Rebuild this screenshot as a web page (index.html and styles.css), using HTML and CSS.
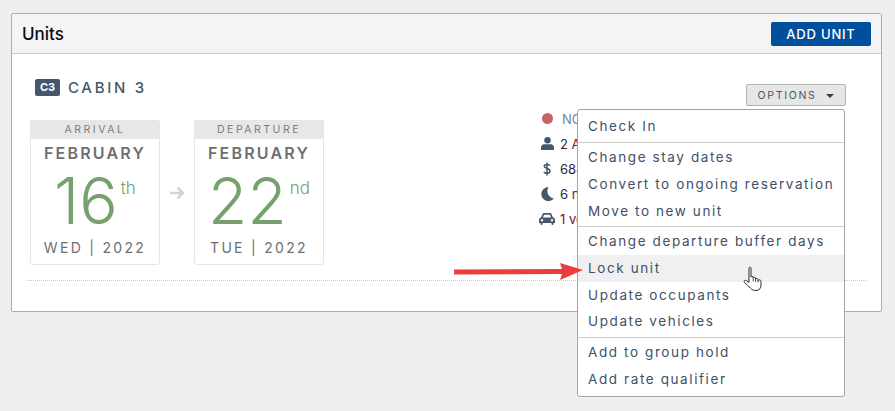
FILE: index.html
```html
<!DOCTYPE html>
<html lang="en">
<head>
    <meta charset="UTF-8">
    <meta name="viewport" content="width=device-width, initial-scale=1.0">
    <title>Units</title>
    <link rel="stylesheet" href="styles.css">
</head>
<body>
<section class="panel">
    <header class="panel-head">
        <h2 class="panel-title">Units</h2>
        <button class="add-btn">ADD UNIT</button>
    </header>

    <div class="panel-body">
        <div class="unit">
            <div class="unit-left">
                <div class="unit-name"><span class="unit-badge">C3</span>CABIN 3</div>
                <div class="dates">
                    <div class="date-card">
                        <div class="date-label">ARRIVAL</div>
                        <div class="date-month">FEBRUARY</div>
                        <div class="date-day">16<sup>th</sup></div>
                        <div class="date-year">WED | 2022</div>
                    </div>
                    <svg class="date-arrow" viewBox="0 0 16 14" width="16" height="14">
                        <path d="M1 7h13M8.500 1.500 14 7l-5.500 5.500" fill="none" stroke="#d4d4d4" stroke-width="2.600"/>
                    </svg>
                    <div class="date-card">
                        <div class="date-label">DEPARTURE</div>
                        <div class="date-month">FEBRUARY</div>
                        <div class="date-day">22<sup>nd</sup></div>
                        <div class="date-year">TUE | 2022</div>
                    </div>
                </div>
            </div>

            <!-- the rest of each row sits behind the open menu -->
            <ul class="info">
                <li><span class="info-icon"><i class="dot"></i></span><span class="status">NO</span></li>
                <li><span class="info-icon">
                    <svg viewBox="0 0 12 12" width="13" height="13"><circle cx="6" cy="3" r="3"/><path d="M0 12V9.800C0 8 1.300 6.700 3 6.700h6c1.700 0 3 1.300 3 3.100V12z"/></svg>
                </span><span>2 </span><span class="link">A</span></li>
                <li><span class="info-icon">
                    <svg viewBox="0 0 8 14" width="8" height="14"><path d="M7 3.600C6.500 2.700 5.300 2.400 4 2.400 2.500 2.400 1.200 3 1.200 4.300 1.200 5.600 2.500 6 4 6.500c1.600.5 3 1 3 2.500S5.600 11.400 4 11.400c-1.400 0-2.600-.5-3.200-1.400M4 .5v13" fill="none" stroke="#46566b" stroke-width="1.500"/></svg>
                </span>684</li>
                <li><span class="info-icon">
                    <svg viewBox="0 0 13 14" width="13" height="14"><path d="M7.500.1A7 7 0 1 0 12.800 11.500 7.500 7.500 0 0 1 7.500.1z"/></svg>
                </span><span>6 </span><span class="link">n</span></li>
                <li><span class="info-icon">
                    <svg viewBox="0 0 16 12" width="16" height="12"><path d="M3.500 1C3.800.400 4.400 0 5 0h6c.6 0 1.200.4 1.500 1L14 4.500c1.200.2 2 1.100 2 2.200V10h-1.500v1a1 1 0 0 1-2 0v-1h-9v1a1 1 0 0 1-2 0v-1H0V6.700c0-1.100.8-2 2-2.200zM5 1.700 4 4.500h8l-1-2.800zM3 6a1.200 1.200 0 1 0 0 2.400A1.200 1.200 0 0 0 3 6zm10 0a1.200 1.200 0 1 0 0 2.400A1.200 1.200 0 0 0 13 6z" fill-rule="evenodd"/></svg>
                </span><span class="link">1 ve</span></li>
            </ul>

            <button class="options-btn">OPTIONS<i class="caret"></i></button>

            <!-- Options dropdown -->
            <div class="menu">
                <a class="menu-item">Check In</a>
                <div class="menu-divider"></div>
                <a class="menu-item">Change stay dates</a>
                <a class="menu-item">Convert to ongoing reservation</a>
                <a class="menu-item">Move to new unit</a>
                <div class="menu-divider"></div>
                <a class="menu-item">Change departure buffer days</a>
                <a class="menu-item menu-item-hover">Lock unit</a>
                <a class="menu-item">Update occupants</a>
                <a class="menu-item">Update vehicles</a>
                <div class="menu-divider"></div>
                <a class="menu-item">Add to group hold</a>
                <a class="menu-item">Add rate qualifier</a>
            </div>
        </div>
    </div>
</section>

<!-- Annotation drawn over the screenshot -->
<svg class="red-arrow" viewBox="0 0 130 18" width="130" height="18">
    <path d="M0 6.500 108 6 106 0 129 7 106 17 108 11 0 11.500z" fill="#ee3b3b"/>
</svg>
<svg class="hand" viewBox="0 0 20 26" width="20" height="26">
    <path d="M6 2.200C6 .8 8 .8 8 2.200V11c0-1 2.200-1 2.200 0v1c0-1 2.300-1 2.300.2v1c0-1 2.500-.8 2.500.4v1c0-1 3-1 3 .6v3.800c0 2.200-1 3.800-2.400 5L13 24.500c-2.500 0-4-.7-5.500-2.300C5.500 20 3.500 18.300 1.500 16.500.3 15 2 13.500 3.700 14.800L6 16.500z" fill="#fff" stroke="#2a2a2a" stroke-width="1" stroke-linejoin="round"/>
    <path d="M10.200 11.500v4M12.500 12.500v3.500M15 14v2.500" stroke="#2a2a2a" stroke-width=".8" fill="none"/>
</svg>
</body>
</html>
```

FILE: styles.css
```css
html, body {
    height: 100%;
    margin: 0;
    overflow: hidden;
}

body {
    position: relative;
    box-sizing: border-box;
    padding: 13px 13px 0 11px;
    background-color: #eeeff1;
    font-family: Inter, "Liberation Sans", sans-serif;
    color: #46566b;
}

.panel {
    height: 299px;
    box-sizing: border-box;
    background-color: #fff;
    border: 1px solid #adadad;
    border-radius: 2px;
}

.panel-head {
    display: flex;
    justify-content: space-between;
    align-items: center;
    box-sizing: border-box;
    height: 40px;
    padding: 0 10px 0 10px;
    background-color: #f4f4f5;
    border-bottom: 1px solid #c8c8c8;
}

.panel-title {
    margin: 0;
    font-size: 17px;
    font-weight: 500;
    color: #0c0c14;
}

.add-btn {
    width: 100px;
    height: 24px;
    padding: 0;
    border: none;
    border-radius: 2px;
    background-color: #004f9c;
    color: #fff;
    font-family: inherit;
    font-size: 13px;
    font-weight: 500;
    letter-spacing: .8px;
}

.panel-body {
    padding: 25px 15px 0 15px;
}

.unit {
    position: relative;
    display: flex;
    height: 201px;
    border-bottom: 1px dotted #c4c4c4;
}

.unit-left {
    width: 512px;
    padding-left: 3px;
    box-sizing: border-box;
}

.unit-name {
    display: flex;
    align-items: center;
    margin-left: 5px;
    font-size: 15px;
    font-weight: 500;
    letter-spacing: 2.700px;
    line-height: 17px;
}

.unit-badge {
    width: 25px;
    height: 17px;
    margin-right: 8px;
    border-radius: 2px;
    background-color: #46566b;
    color: #fff;
    font-size: 11px;
    font-weight: 700;
    letter-spacing: 0;
    line-height: 17px;
    text-align: center;
}

.dates {
    display: flex;
    align-items: center;
    gap: 9px;
    margin-top: 24px;
}

.date-card {
    width: 130px;
    height: 145px;
    box-sizing: border-box;
    border: 1px solid #e6e6e6;
    border-radius: 3px;
    text-align: center;
    color: #6f6f72;
}

.date-label {
    height: 19px;
    margin: -1px -1px 0;
    background-color: #e7e7e7;
    border-radius: 3px 3px 0 0;
    font-size: 10.500px;
    letter-spacing: 2.500px;
    line-height: 19px;
    color: #7c7c80;
}

.date-month {
    margin-top: 5px;
    font-size: 16px;
    font-weight: 600;
    letter-spacing: 2.200px;
    line-height: 18px;
}

.date-day {
    margin-top: 6px;
    font-size: 64px;
    font-weight: 300;
    line-height: 66px;
    letter-spacing: 0;
    color: #76a06e;
}

.date-day sup {
    margin-left: 3px;
    font-size: 17px;
    font-weight: 300;
    letter-spacing: 0;
    line-height: 0;
    vertical-align: 30px;
}

.date-year {
    margin-top: 5px;
    font-size: 14px;
    letter-spacing: 2.300px;
    line-height: 18px;
}

.date-arrow {
    flex: none;
}

.info {
    margin: 27px 0 0;
    padding: 0;
    list-style: none;
    font-size: 13px;
    color: #1e2a4a;
}

.info li {
    display: flex;
    align-items: center;
    height: 25px;
    white-space: pre;
}

.info-icon {
    display: flex;
    flex: none;
    justify-content: center;
    width: 16px;
    margin-right: 5px;
}

.info-icon svg {
    fill: #46566b;
}

.dot {
    width: 11px;
    height: 11px;
    border-radius: 50%;
    background-color: #c96464;
}

.status {
    margin-left: 2px;
    color: #6b84a6;
}

.link {
    color: #6d1538;
}

.options-btn {
    position: absolute;
    top: 5px;
    right: 20px;
    width: 100px;
    height: 22px;
    padding: 0;
    border: 1px solid #b4b4b4;
    border-radius: 2px;
    background-color: #e6e6e6;
    color: #46566b;
    font-family: inherit;
    font-size: 10.500px;
    letter-spacing: 1.700px;
}

.caret {
    display: inline-block;
    margin-left: 10px;
    vertical-align: 1px;
    border-style: solid;
    border-width: 4px 4px 0;
    border-color: #333c48 transparent transparent;
}

.menu {
    position: absolute;
    top: 30px;
    left: 550px;
    width: 268px;
    box-sizing: border-box;
    padding: 3.300px 0 3px;
    background-color: #fff;
    border: 1px solid #a4a4a4;
    border-radius: 3px;
    font-size: 13.500px;
    letter-spacing: 1.600px;
    color: #3f5068;
}

.menu-item {
    display: block;
    height: 26.700px;
    padding-left: 10px;
    line-height: 26.700px;
    white-space: nowrap;
}

.menu-item-hover {
    background-color: #f0f0f0;
}

.menu-divider {
    height: 1px;
    margin: 1.600px 0;
    background-color: #cdcdcd;
}

.red-arrow {
    position: absolute;
    top: 263px;
    left: 454px;
}

.hand {
    position: absolute;
    top: 266px;
    left: 743px;
}
```
